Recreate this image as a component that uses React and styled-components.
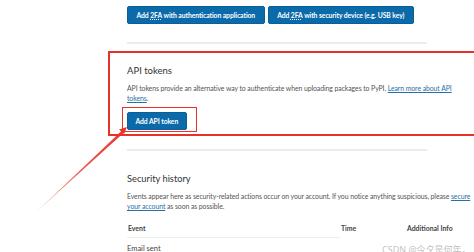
import React from "react";
import styled, { createGlobalStyle } from "styled-components";

const Global = createGlobalStyle`
  html, body { margin: 0; padding: 0; background: #fff; }
  body { font-family: Lato, "Noto Sans", sans-serif; color: #464646; overflow: hidden; }
  #root { width: 474px; height: 252px; overflow: hidden; position: relative; }
`;

const Page = styled.div`
  display: flex;
  flex-direction: column;
  padding: 6px 0 0 108px;
  width: 520px;
`;

const Section = styled.div`
  padding-left: 19px;
  width: 330px;
`;

const ButtonRow = styled.div`
  display: flex;
  gap: 3px;
`;

const Button = styled.button`
  font-family: Lato, "Noto Sans", sans-serif;
  font-weight: 700;
  font-size: 6.8px;
  color: #fff;
  background: #0b6aa9;
  border: 1px solid #0a5f98;
  border-radius: 2px;
  height: 18px;
  padding: 0 ${(p) => p.$pad || 7}px;
  white-space: nowrap;
  letter-spacing: -0.08px;
  display: flex;
  align-items: center;
`;

const Abbr = styled.span`
  text-decoration: underline dotted;
  text-underline-offset: 1px;
`;

const Divider = styled.hr`
  border: none;
  height: 2px;
  background: #ececec;
  margin: ${(p) => p.$m || "0"};
  width: ${(p) => p.$w || 300}px;
`;

const Highlight = styled.div`
  border: 2px solid #e6332a;
  width: 400px;
  margin-top: 7px;
  padding: 11px 0 0 17px;
  height: 85px;
  box-sizing: border-box;
`;

const Heading = styled.h2`
  margin: ${(p) => p.$m || "0"};
  font-family: Lato, "Noto Sans", sans-serif;
  font-weight: 400;
  font-size: ${(p) => p.$size || 9.5}px;
  line-height: 14px;
  color: #333;
`;

const Para = styled.p`
  margin: ${(p) => p.$m || "0"};
  font-size: 6.9px;
  line-height: 9.7px;
  color: #555;
  width: ${(p) => p.$w || 330}px;
  letter-spacing: -0.08px;
`;

const Link = styled.a`
  color: #2a6fa8;
  text-decoration: underline;
`;

const ButtonHighlight = styled.div`
  display: inline-flex;
  border: 1.5px solid #e6332a;
  padding: 3.5px 9px 1.5px 3.5px;
  margin: 4px 0 0 -5px;
`;

const Table = styled.div`
  display: grid;
  grid-template-columns: 213px 66px 90px;
  margin-top: 12px;
  font-size: 6.9px;
  width: 370px;
`;

const Th = styled.div`
  font-weight: 700;
  color: #444;
  padding: 0 1px 4px;
  height: 10px;
  line-height: 10px;
  border-bottom: ${(p) => (p.$line ? "1px solid #eee" : "none")};
`;

const Td = styled.div`
  color: #444;
  padding-top: 6px;
  font-size: 7.5px;
`;

const Watermark = styled.div`
  position: absolute;
  left: 382px;
  top: 243px;
  font-family: "Noto Sans", "Noto Sans CJK SC", sans-serif;
  font-size: 9px;
  color: rgba(165, 165, 165, 0.7);
  white-space: nowrap;
`;

const Arrow = styled.svg`
  position: absolute;
  left: 0;
  top: 0;
  pointer-events: none;
`;

export default function App() {
  return (
    <>
      <Global />
      <Page>
        <Section>
          <ButtonRow>
            <Button $pad={8.5}>
              Add&nbsp;<Abbr>2FA</Abbr>&nbsp;with authentication application
            </Button>
            <Button $pad={8.5}>
              Add&nbsp;<Abbr>2FA</Abbr>&nbsp;with security device (e.g. USB key)
            </Button>
          </ButtonRow>
          <Divider $m="18px 0 0 0" />
        </Section>
        <Highlight>
          <Heading>API tokens</Heading>
          <Para $m="6px 0 0 0">
            API tokens provide an alternative way to authenticate when uploading packages to PyPI.{" "}
            <Link>Learn more about API tokens</Link>.
          </Para>
          <ButtonHighlight>
            <Button $pad={8}>Add API token</Button>
          </ButtonHighlight>
        </Highlight>
        <Section>
          <Divider $m="13px 0 0 0" />
          <Heading $size={9.3} $m="21px 0 0 0">Security history</Heading>
          <Para $m="6px 0 0 0" $w={352}>
            Events appear here as security-related actions occur on your account. If you notice anything suspicious, please{" "}
            <Link>secure your account</Link> as soon as possible.
          </Para>
          <Table>
            <Th $line>Event</Th>
            <Th>Time</Th>
            <Th>Additional Info</Th>
            <Td>Email sent</Td>
          </Table>
        </Section>
      </Page>
      <Arrow width="474" height="252" viewBox="0 0 474 252">
        <defs>
          <linearGradient id="g" x1="33" y1="215" x2="126" y2="128" gradientUnits="userSpaceOnUse">
            <stop offset="0" stopColor="#e6332a" stopOpacity="0.15" />
            <stop offset="0.5" stopColor="#e6332a" stopOpacity="0.8" />
            <stop offset="1" stopColor="#e6332a" />
          </linearGradient>
        </defs>
        <polygon points="33,215 122,130.5 124,132.5" fill="url(#g)" />
        <polygon points="127,127 119,129.5 124,134" fill="#e6332a" />
      </Arrow>
      <Watermark>CSDN @今夕是何年，</Watermark>
    </>
  );
}
